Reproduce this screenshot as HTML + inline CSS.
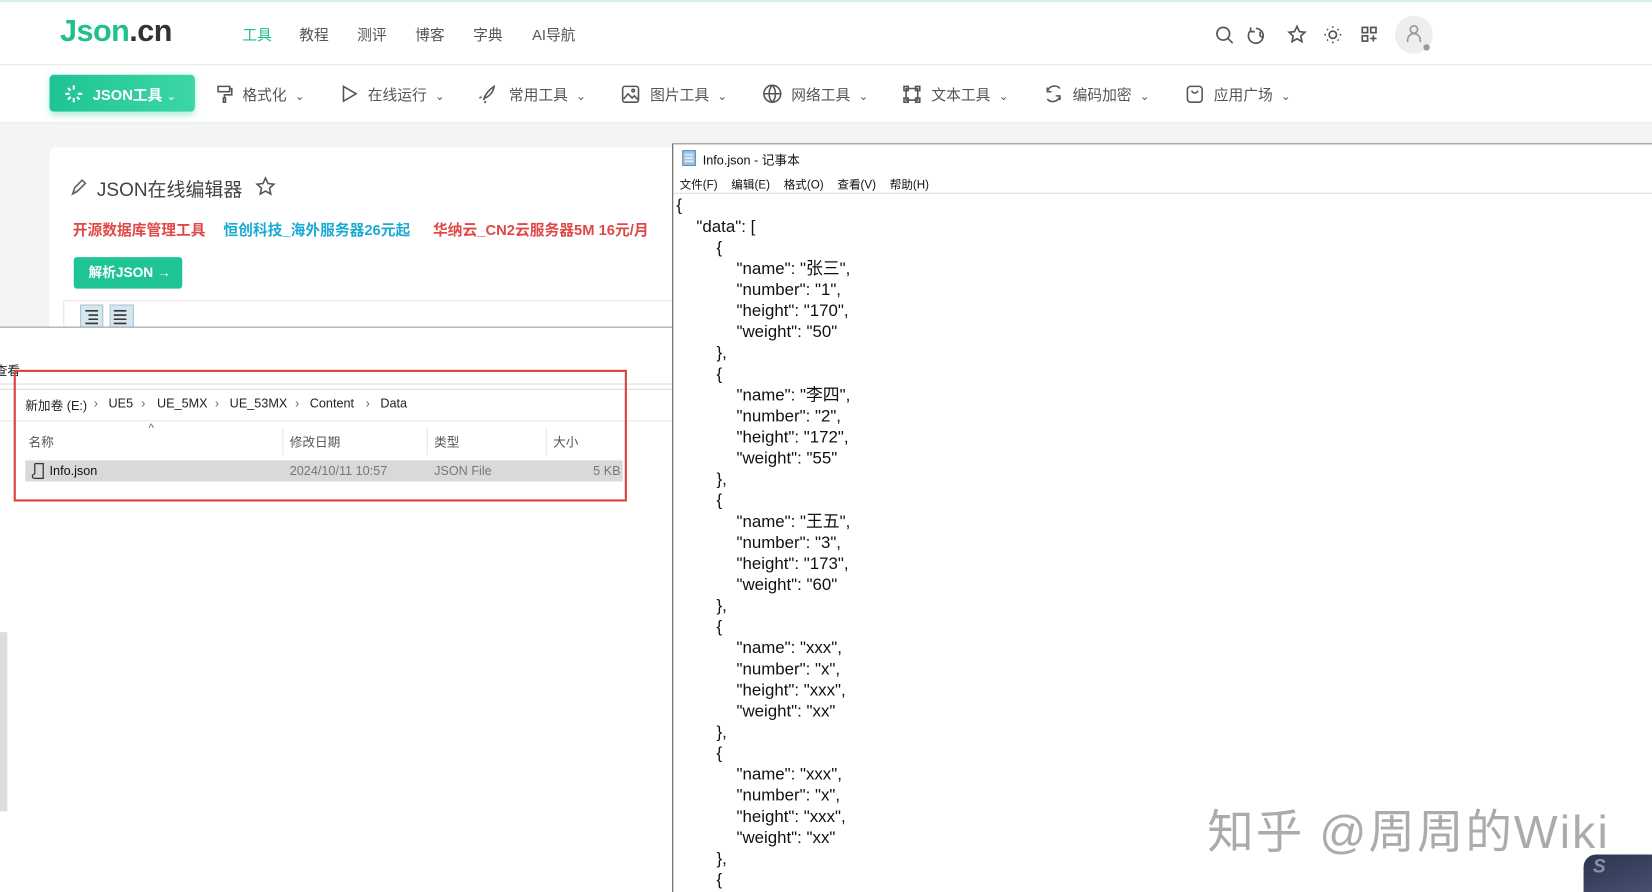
<!DOCTYPE html>
<html><head><meta charset="utf-8"><style>
*{margin:0;padding:0;box-sizing:border-box}
html,body{width:1652px;height:892px;overflow:hidden;background:#fff}
#w{position:absolute;left:0;top:0;width:1568px;height:847px;transform:scale(1.0536);transform-origin:0 0;font-family:"Liberation Sans","Noto Sans CJK SC",sans-serif;color:#555;background:#f3f4f6;overflow:hidden}
.a{position:absolute;white-space:nowrap}
.nav{font-size:14px;color:#555;top:23px}
.tb{font-size:14px;color:#555;top:80px}
.ic{position:absolute}
.bc{position:absolute;top:376px;font-size:12px;color:#222;white-space:nowrap}
.jb{position:absolute;left:642px;top:186px;font-size:16px;color:#111;line-height:20px;font-family:"Liberation Sans","Noto Sans CJK SC",sans-serif}
.jb div{white-space:pre;height:20px}
.l1{padding-left:19px}.l2{padding-left:38px}.l3{padding-left:57px}
</style></head><body><div id="w">
<div class="a" style="left:0;top:0;width:1568px;height:62px;background:#fff;border-top:2px solid #d7efe9;border-bottom:1px solid #e4e4e4"></div>
<div class="a" style="left:57px;top:14px;font-size:29px;font-weight:bold;color:#333;letter-spacing:-0.5px"><span style="color:#1fbf8f">Json</span>.cn</div>
<div class="a nav" style="left:230px;color:#1fbf8f">工具</div>
<div class="a nav" style="left:284px">教程</div>
<div class="a nav" style="left:339px">测评</div>
<div class="a nav" style="left:394px">博客</div>
<div class="a nav" style="left:449px">字典</div>
<div class="a nav" style="left:505px">AI导航</div>
<svg class="ic" style="left:1152px;top:23px" width="160" height="20" fill="none" stroke="#555" stroke-width="1.6">
<circle cx="9" cy="9" r="6"/><path d="M13.5 13.5l4.5 4.5"/>
<path d="M40 4a7 7 0 1 1-5 2M35 3v4h4M44 7v4l3 2"/>
<path d="M79 2l2.3 5 5.2.6-3.9 3.6 1.1 5.3-4.7-2.7-4.7 2.7 1.1-5.3-3.9-3.6 5.2-.6z"/>
<circle cx="113" cy="10" r="3.5"/><path d="M113 2v1.5M113 16.5v1.5M105 10h1.5M119.5 10h1.5M107.5 4.5l1 1M117.5 14.5l1 1M107.5 15.5l1-1M117.5 5.5l1-1" stroke-dasharray="1.5 1"/>
<rect x="141" y="3" width="5" height="5"/><rect x="149" y="3" width="5" height="5"/><rect x="141" y="11" width="5" height="5"/><path d="M151.5 10.5v6M148.5 13.5h6"/>
</svg>
<div class="a" style="left:1324px;top:15px;width:36px;height:36px;border-radius:50%;background:#eee"></div>
<svg class="ic" style="left:1332px;top:22px" width="30" height="30" fill="none" stroke="#999" stroke-width="1.6"><circle cx="10" cy="6" r="3.5"/><path d="M4 18v-2a6 6 0 0 1 12 0v2"/><circle cx="22" cy="23" r="3" fill="#999" stroke="none"/></svg>
<div class="a" style="left:0;top:62px;width:1568px;height:55px;background:#fff;border-bottom:1px solid #e6e6e6"></div>
<div class="a" style="left:47px;top:71px;width:138px;height:35px;border-radius:4px;background:linear-gradient(90deg,#1fc494,#3dd6a6);box-shadow:0 3px 6px rgba(31,196,148,.35)"></div>
<svg class="ic" style="left:61px;top:80px" width="18" height="18" stroke="#fff" stroke-width="2"><path d="M9 1v4M9 13v4M1 9h4M13 9h4M3.5 3.5l2.5 2.5M12 12l2.5 2.5M3.5 14.5l2.5-2.5"/></svg>
<div class="a" style="left:88px;top:80px;font-size:14px;color:#fff;font-weight:bold">JSON工具 <span style="font-weight:normal;font-size:11px">⌄</span></div>
<svg class="ic" style="left:204px;top:80px" width="1040" height="18" fill="none" stroke="#555" stroke-width="1.5">
<path d="M3 2h11v5H3zM14 4h2v6H9v3M8 13h2v4H8z"/>
<path d="M122 2l12 7-12 7z"/>
<path d="M255 15c1-4 4-9 10-13-1 6-5 10-9 11zM253 12l-2 1M257 16l-1 2"/>
<rect x="387" y="2" width="15" height="15" rx="2"/><path d="M388 14l4-5 4 4 2-2 4 4"/><circle cx="397" cy="6" r="1.2"/>
<circle cx="529" cy="9" r="8"/><path d="M521 9h16M529 1c-4 4-4 12 0 16M529 1c4 4 4 12 0 16"/>
<path d="M656 4h11v11h-11zM654 2h4v4h-4zM665 2h4v4h-4zM654 13h4v4h-4zM665 13h4v4h-4z"/>
<path d="M790 7a7 7 0 0 1 12-3M802 11a7 7 0 0 1-12 3M790 3v4h4M802 15v-4h-4"/>
<rect x="923" y="2" width="14" height="15" rx="3"/><path d="M927 6c1 3 5 3 6 0"/>
</svg>
<div class="a tb" style="left:230px">格式化 <span style="font-size:11px;margin-left:4px">⌄</span></div>
<div class="a tb" style="left:349px">在线运行 <span style="font-size:11px;margin-left:4px">⌄</span></div>
<div class="a tb" style="left:483px">常用工具 <span style="font-size:11px;margin-left:4px">⌄</span></div>
<div class="a tb" style="left:617px">图片工具 <span style="font-size:11px;margin-left:4px">⌄</span></div>
<div class="a tb" style="left:751px">网络工具 <span style="font-size:11px;margin-left:4px">⌄</span></div>
<div class="a tb" style="left:884px">文本工具 <span style="font-size:11px;margin-left:4px">⌄</span></div>
<div class="a tb" style="left:1018px">编码加密 <span style="font-size:11px;margin-left:4px">⌄</span></div>
<div class="a tb" style="left:1152px">应用广场 <span style="font-size:11px;margin-left:4px">⌄</span></div>
<div class="a" style="left:47px;top:140px;width:600px;height:200px;background:#fff;border-radius:6px"></div>
<svg class="ic" style="left:66px;top:169px" width="18" height="18" fill="none" stroke="#666" stroke-width="1.6"><path d="M3 15l2-6 7-7 3 3-7 7zM3 15l4-2"/></svg>
<div class="a" style="left:92px;top:166px;font-size:18px;color:#444">JSON在线编辑器</div>
<svg class="ic" style="left:242px;top:167px" width="20" height="20" fill="none" stroke="#555" stroke-width="1.5"><path d="M10 2l2.4 5.2 5.6.6-4.2 3.8 1.2 5.6-5-2.9-5 2.9 1.2-5.6-4.2-3.8 5.6-.6z"/></svg>
<div class="a" style="left:69px;top:208px;font-size:14px;font-weight:bold;color:#e04848">开源数据库管理工具</div>
<div class="a" style="left:212px;top:208px;font-size:14px;font-weight:bold;color:#1aabd2">恒创科技_海外服务器26元起</div>
<div class="a" style="left:411px;top:208px;font-size:14px;font-weight:bold;color:#e04848">华纳云_CN2云服务器5M 16元/月</div>
<div class="a" style="left:70px;top:244px;width:103px;height:30px;background:#1fc494;border-radius:3px;color:#fff;font-size:13px;font-weight:bold;line-height:30px;padding-left:14px">解析JSON →</div>
<div class="a" style="left:60px;top:285px;width:590px;height:40px;border:1px solid #e2e2e2;background:#fff"></div>
<div class="a" style="left:76px;top:289px;width:22px;height:22px;background:#d5e6ef;border:1px solid #a9c3d2"></div>
<div class="a" style="left:104px;top:289px;width:23px;height:22px;background:#d5e6ef;border:1px solid #a9c3d2"></div>
<svg class="ic" style="left:76px;top:289px" width="52" height="22" stroke="#333" stroke-width="1.5"><path d="M5 6h12M8 10h9M8 14h9M5 18h12M32 6h12M32 10h12M32 14h12M32 18h12"/></svg>
<!-- explorer -->
<div class="a" style="left:0;top:310px;width:640px;height:540px;background:#fff;border-top:1px solid #999"></div>
<div class="a" style="left:-5px;top:343px;font-size:12px;color:#222">查看</div>
<div class="a" style="left:0;top:364px;width:638px;height:1px;background:#ddd"></div>
<div class="a" style="left:0;top:369px;width:638px;height:1px;background:#ddd"></div>
<div class="a" style="left:0;top:399px;width:638px;height:1px;background:#e5e5e5"></div>
<div class="bc" style="left:24px">新加卷 (E:)</div>
<div class="bc" style="left:89px;color:#666">›</div>
<div class="bc" style="left:103px">UE5</div>
<div class="bc" style="left:134px;color:#666">›</div>
<div class="bc" style="left:149px">UE_5MX</div>
<div class="bc" style="left:204px;color:#666">›</div>
<div class="bc" style="left:218px">UE_53MX</div>
<div class="bc" style="left:280px;color:#666">›</div>
<div class="bc" style="left:294px">Content</div>
<div class="bc" style="left:347px;color:#666">›</div>
<div class="bc" style="left:361px">Data</div>
<div class="a" style="left:141px;top:401px;font-size:11px;color:#666">^</div>
<div class="a" style="left:27px;top:411px;font-size:12px;color:#555">名称</div>
<div class="a" style="left:275px;top:411px;font-size:12px;color:#555">修改日期</div>
<div class="a" style="left:412px;top:411px;font-size:12px;color:#555">类型</div>
<div class="a" style="left:525px;top:411px;font-size:12px;color:#555">大小</div>
<div class="a" style="left:268px;top:406px;width:1px;height:26px;background:#e5e5e5"></div>
<div class="a" style="left:405px;top:406px;width:1px;height:26px;background:#e5e5e5"></div>
<div class="a" style="left:518px;top:406px;width:1px;height:26px;background:#e5e5e5"></div>
<div class="a" style="left:24px;top:437px;width:567px;height:20px;background:#d9d9d9"></div>
<svg class="ic" style="left:29px;top:439px" width="14" height="16" fill="none" stroke="#333" stroke-width="1.2"><path d="M4 1h8v14H4M4 1v10M4 11c-3 0-3 4 0 4"/></svg>
<div class="a" style="left:47px;top:440px;font-size:12px;color:#111">Info.json</div>
<div class="a" style="left:275px;top:440px;font-size:12px;color:#777">2024/10/11 10:57</div>
<div class="a" style="left:412px;top:440px;font-size:12px;color:#777">JSON File</div>
<div class="a" style="left:563px;top:440px;font-size:12px;color:#777">5 KB</div>
<div class="a" style="left:13px;top:351px;width:582px;height:125px;border:2px solid #d9413f"></div>
<div class="a" style="left:0;top:600px;width:7px;height:170px;background:#ddd"></div>
<!-- notepad -->
<div class="a" style="left:638px;top:136px;width:940px;height:720px;background:#fff;border-left:1px solid #555;border-top:1px solid #888"></div>
<svg class="ic" style="left:647px;top:142px" width="14" height="16"><rect x="1" y="1" width="12" height="14" fill="#9cc7e8" stroke="#5a86b0"/><path d="M3 5h8M3 8h8M3 11h8" stroke="#fff"/></svg>
<div class="a" style="left:667px;top:143px;font-size:12px;color:#111">Info.json - 记事本</div>
<div class="a" style="left:645px;top:167px;font-size:11px;color:#111;word-spacing:10px">文件(F) 编辑(E) 格式(O) 查看(V) 帮助(H)</div>
<div class="a" style="left:639px;top:183px;width:930px;height:1px;background:#ddd"></div>
<div class="jb">
<div>{</div>
<div class="l1">"data": [</div>
<div class="l2">{</div>
<div class="l3">"name": "张三",</div>
<div class="l3">"number": "1",</div>
<div class="l3">"height": "170",</div>
<div class="l3">"weight": "50"</div>
<div class="l2">},</div>
<div class="l2">{</div>
<div class="l3">"name": "李四",</div>
<div class="l3">"number": "2",</div>
<div class="l3">"height": "172",</div>
<div class="l3">"weight": "55"</div>
<div class="l2">},</div>
<div class="l2">{</div>
<div class="l3">"name": "王五",</div>
<div class="l3">"number": "3",</div>
<div class="l3">"height": "173",</div>
<div class="l3">"weight": "60"</div>
<div class="l2">},</div>
<div class="l2">{</div>
<div class="l3">"name": "xxx",</div>
<div class="l3">"number": "x",</div>
<div class="l3">"height": "xxx",</div>
<div class="l3">"weight": "xx"</div>
<div class="l2">},</div>
<div class="l2">{</div>
<div class="l3">"name": "xxx",</div>
<div class="l3">"number": "x",</div>
<div class="l3">"height": "xxx",</div>
<div class="l3">"weight": "xx"</div>
<div class="l2">},</div>
<div class="l2">{</div>
</div>
<div class="a" style="left:1146px;top:754px;font-size:44px;color:#ababab;letter-spacing:2px">知乎 @周周的Wiki</div>
<div class="a" style="left:1503px;top:811px;width:70px;height:40px;border-radius:12px 0 0 0;background:linear-gradient(160deg,#2a3550,#4a5270)"></div>
<div class="a" style="left:1512px;top:812px;font-size:18px;font-weight:bold;color:#8a90a8;font-style:italic">S</div>
</div></body></html>
